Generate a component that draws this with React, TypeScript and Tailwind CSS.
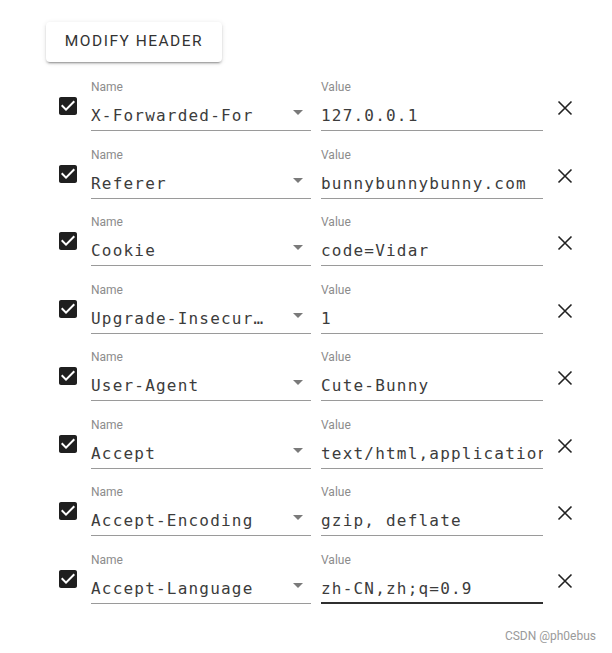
import React from "react";

interface HeaderRow {
  name: string;
  value: string;
}

const rows: HeaderRow[] = [
  { name: "X-Forwarded-For", value: "127.0.0.1" },
  { name: "Referer", value: "bunnybunnybunny.com" },
  { name: "Cookie", value: "code=Vidar" },
  { name: "Upgrade-Insecur\u2026", value: "1" },
  { name: "User-Agent", value: "Cute-Bunny" },
  { name: "Accept", value: "text/html,application/xhtml+xml" },
  { name: "Accept-Encoding", value: "gzip, deflate" },
  { name: "Accept-Language", value: "zh-CN,zh;q=0.9" },
];

const mono = { fontFamily: '"DejaVu Sans Mono", "Liberation Mono", monospace' };

function CheckIcon() {
  return (
    <svg width="24" height="24" viewBox="0 0 24 24" className="mt-[14px] shrink-0 text-[#1f1f1f]">
      <path
        fill="currentColor"
        d="M19 3H5c-1.11 0-2 .9-2 2v14c0 1.1.89 2 2 2h14c1.11 0 2-.9 2-2V5c0-1.1-.89-2-2-2zm-9 14l-5-5 1.41-1.41L10 14.17l7.59-7.59L19 8l-9 9z"
      />
    </svg>
  );
}

function CloseIcon() {
  return (
    <svg width="24" height="24" viewBox="0 0 24 24" className="mt-[16px] shrink-0 text-[#222]">
      <path d="M5.5 5.5l13 13M18.5 5.5l-13 13" stroke="currentColor" strokeWidth={1.6} fill="none" />
    </svg>
  );
}

export default function App() {
  return (
    <div
      className="relative w-[612px] h-[653px] bg-white pl-[46px] pt-[22px]"
      style={{ fontFamily: 'Roboto, "Liberation Sans", sans-serif' }}
    >
      {/* Modify header button */}
      <button className="h-[40px] w-[176px] rounded-[4px] bg-white text-[15.5px] font-normal tracking-[1.5px] text-[#333] shadow-[0_3px_1px_-2px_rgba(0,0,0,0.2),0_2px_2px_0_rgba(0,0,0,0.14),0_1px_5px_0_rgba(0,0,0,0.12)]">
        MODIFY HEADER
      </button>

      {/* Header rows */}
      <div className="mt-[18px]">
        {rows.map((row, i) => {
          const last = i === rows.length - 1;
          return (
            <div key={i} className="flex h-[67.5px] items-start pl-[10px]">
              <CheckIcon />

              {/* Name */}
              <div className="ml-[11px] w-[220px]">
                <div className="h-[14px] text-[12px] leading-[14px] text-[#8c8c8c]">Name</div>
                <div className="relative h-[37px] border-b border-[#9a9a9a] pt-[10px]">
                  <div
                    className="overflow-hidden whitespace-nowrap pr-[28px] text-[16px] leading-[24px] tracking-[1.2px] text-[#3c3c3c]"
                    style={mono}
                  >
                    {row.name}
                  </div>
                  <div className="absolute right-[8px] top-[16px] h-0 w-0 border-l-[5px] border-r-[5px] border-t-[5px] border-l-transparent border-r-transparent border-t-[#7a7a7a]" />
                </div>
              </div>

              {/* Value */}
              <div className="ml-[10px] w-[222px]">
                <div className="h-[14px] text-[12px] leading-[14px] text-[#8c8c8c]">Value</div>
                <div
                  className={
                    last
                      ? "h-[37px] border-b-2 border-[#2f2f2f] pt-[10px]"
                      : "h-[37px] border-b border-[#9a9a9a] pt-[10px]"
                  }
                >
                  <div
                    className="overflow-hidden whitespace-nowrap text-[16px] leading-[24px] tracking-[1.2px] text-[#3c3c3c]"
                    style={mono}
                  >
                    {row.value}
                  </div>
                </div>
              </div>

              <div className="ml-[10px]">
                <CloseIcon />
              </div>
            </div>
          );
        })}
      </div>

      <div className="absolute bottom-[8px] right-[16px] text-[12px] text-[#9a9a9a]">CSDN @ph0ebus</div>
    </div>
  );
}
